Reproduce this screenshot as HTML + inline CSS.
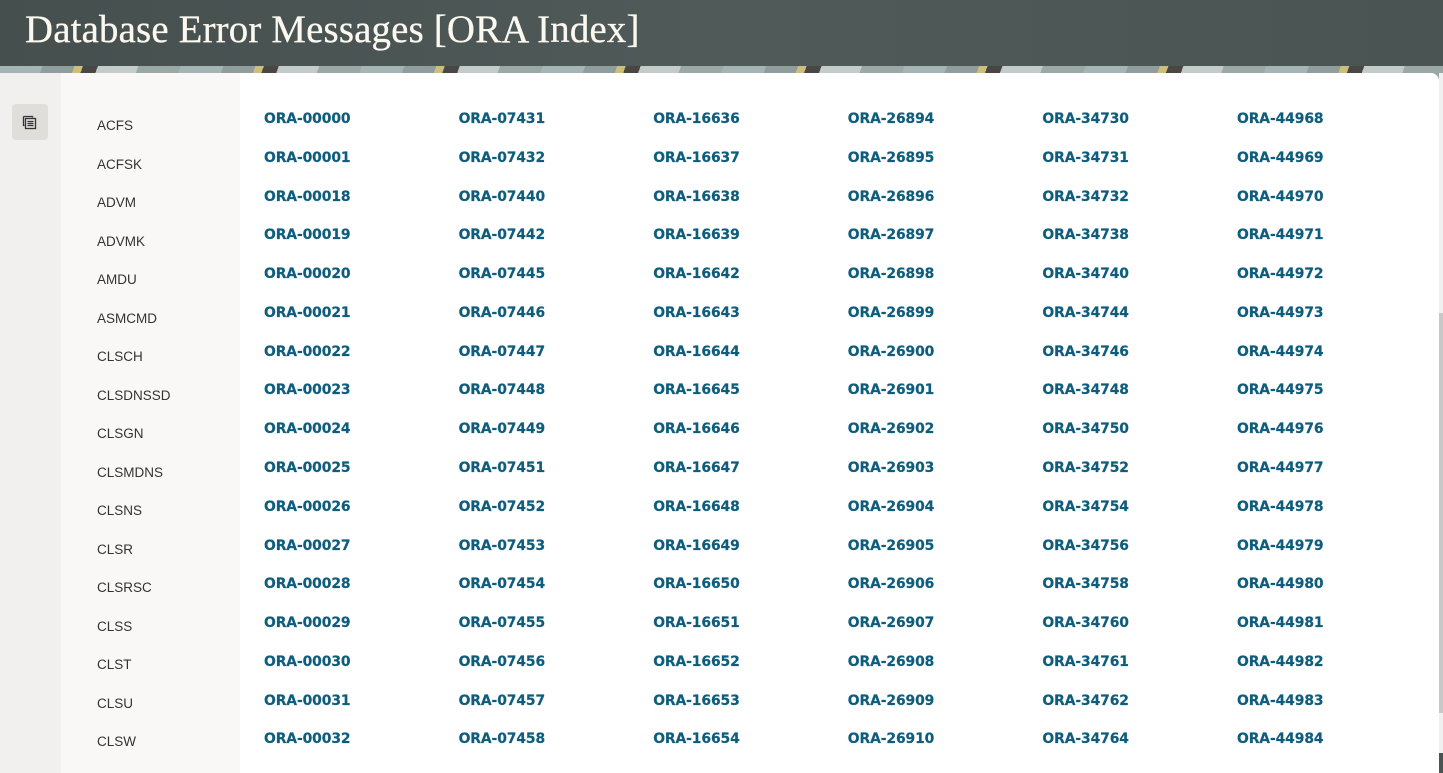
<!DOCTYPE html>
<html><head><meta charset="utf-8"><style>
*{margin:0;padding:0;box-sizing:border-box}
body{width:1443px;height:752px;overflow:hidden;background:#4a5352;font-family:"Liberation Sans",sans-serif;position:relative}
.hdr{position:absolute;left:0;top:0;width:1443px;height:70px;background:linear-gradient(90deg,#454f4e,#505a59 50%,#4a5452)}
.hdr h1{position:absolute;left:25px;top:7px;font-family:"Liberation Serif",serif;font-weight:normal;font-size:38.8px;color:#fbf8f0;letter-spacing:0.2px;-webkit-text-stroke:0.3px #fbf8f0}
.band{position:absolute;left:0;top:66px;width:1443px;height:14px;background:repeating-linear-gradient(110deg,#a5b5b4 0 40px,#8f9e9c 40px 70px,#cbbf7a 70px 78px,#4a4644 78px 92px,#c4cccb 92px 130px,#9aa8a6 130px 170px)}
.card{position:absolute;left:0;top:73px;width:1439px;height:700px;background:#fff;border-top-right-radius:8px;overflow:hidden}
.scroll{position:absolute;left:1439px;top:73px;width:4px;height:680px;background:#f0f0f0}
.scroll i{position:absolute;left:0;top:240px;width:4px;height:400px;background:#c8c8c8}
.rail{position:absolute;left:0;top:0;width:61px;height:700px;background:#f1f0ee}
.ic{position:absolute;left:12px;top:31px;width:36px;height:36px;background:#e0dedb;border-radius:4px}
.side{position:absolute;left:61px;top:0;width:179px;height:700px;background:#f9f8f6}
.side div{position:absolute;left:36px;font-size:13.5px;color:#333}
.l{position:absolute;font-family:"DejaVu Sans","Liberation Sans",sans-serif;font-weight:bold;font-size:13.9px;color:#0f5d7c;letter-spacing:-0.1px;-webkit-text-stroke:0.2px #0f5d7c}
</style></head><body>
<div class="hdr"><h1>Database Error Messages [ORA Index]</h1></div>
<div class="band"></div>
<div class="card">
<div class="rail"><div class="ic"><svg width="36" height="36" viewBox="0 0 36 36"><g fill="none" stroke="#333" stroke-width="1.3"><rect x="13.5" y="14.5" width="10" height="10"/><path d="M11.5 12.5h9v1M11.5 12.5v9h1M15.5 17.5h6M15.5 19.5h6M15.5 21.5h6"/></g></svg></div></div>
<div class="side" id="side"></div>
<div id="links"></div>
</div>
<div class="scroll"><i></i></div>
<script>
var s=["ACFS","ACFSK","ADVM","ADVMK","AMDU","ASMCMD","CLSCH","CLSDNSSD","CLSGN","CLSMDNS","CLSNS","CLSR","CLSRSC","CLSS","CLST","CLSU","CLSW"];
var h="";s.forEach(function(t,i){h+='<div style="top:'+(45+i*38.5)+'px">'+t+'</div>'});
document.getElementById("side").innerHTML=h;
var cols=[
["00000","00001","00018","00019","00020","00021","00022","00023","00024","00025","00026","00027","00028","00029","00030","00031","00032"],
["07431","07432","07440","07442","07445","07446","07447","07448","07449","07451","07452","07453","07454","07455","07456","07457","07458"],
["16636","16637","16638","16639","16642","16643","16644","16645","16646","16647","16648","16649","16650","16651","16652","16653","16654"],
["26894","26895","26896","26897","26898","26899","26900","26901","26902","26903","26904","26905","26906","26907","26908","26909","26910"],
["34730","34731","34732","34738","34740","34744","34746","34748","34750","34752","34754","34756","34758","34760","34761","34762","34764"],
["44968","44969","44970","44971","44972","44973","44974","44975","44976","44977","44978","44979","44980","44981","44982","44983","44984"]];
h="";cols.forEach(function(c,j){c.forEach(function(t,i){h+='<div class="l" style="left:'+(264+j*194.6)+'px;top:'+(38+i*38.78)+'px">ORA-'+t+'</div>'})});
document.getElementById("links").innerHTML=h;
</script>
</body></html>
